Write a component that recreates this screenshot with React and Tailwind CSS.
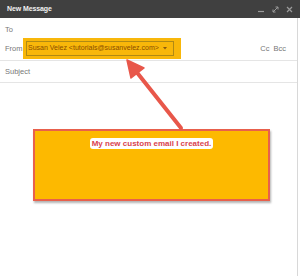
export default function App() {
    return (
        <div className="relative h-[276px] w-[300px] overflow-hidden bg-white font-['Liberation_Sans',Arial,sans-serif]">
            <div className="flex h-[18px] items-center justify-between bg-[#404040] pl-[7px] pr-[7px]">
                <span className="text-[7px] font-bold tracking-[-0.1px] text-[#f2f2f2]">New Message</span>
                <div className="flex items-center gap-[7px] text-[#9a9a9a]">
                    <svg width="7" height="7" viewBox="0 0 7 7"><path d="M0 5.5h6" stroke="currentColor" strokeWidth="1.2" /></svg>
                    <svg width="7" height="7" viewBox="0 0 7 7"><path d="M1 6 6 1M3.5 1H6v2.5M1 3.5V6h2.5" stroke="currentColor" strokeWidth="1" fill="none" /></svg>
                    <svg width="7" height="7" viewBox="0 0 7 7"><path d="M1 1l5 5M6 1 1 6" stroke="currentColor" strokeWidth="1.2" /></svg>
                </div>
            </div>
            <div className="h-[258px] w-[298px] border-r border-[#d8d8d8]">
                <div className="flex h-[20px] items-end pb-[3px] pl-[5px] text-[7.5px] text-[#777]">To</div>
                <div className="flex h-[23px] items-start border-b border-[#e5e5e5] pl-[5px] pr-[11px]">
                    <span className="mt-[5px] w-[18px] text-[7.5px] text-[#777]">From</span>
                    <div className="h-[21px] w-[158px] bg-[#f8b70a] p-[3px]">
                        <div className="flex h-[15px] w-[148px] items-center justify-between border border-[#b08a14] pl-[1px] pr-[6px] text-[7px] text-[#8a4d00]">
                            <span>Susan Velez &lt;tutorials@susanvelez.com&gt;</span>
                            <svg width="4" height="3" viewBox="0 0 4 3"><path d="M0 0h4L2 2.5z" fill="#8a5a10" /></svg>
                        </div>
                    </div>
                    <div className="mt-[5px] ml-auto flex gap-[4px] text-[7.5px] text-[#777]">
                        <span>Cc</span>
                        <span>Bcc</span>
                    </div>
                </div>
                <div className="flex h-[22px] items-center border-b border-[#e5e5e5] pl-[5px] text-[7.5px] text-[#777]">Subject</div>
                <div className="pl-[33px] pt-[46px]">
                    <div className="flex h-[72px] w-[237px] justify-center border-2 border-[#e8604c] bg-[#fdb900] pt-[7px] shadow-[1px_2px_2px_rgba(0,0,0,0.3)]">
                        <span className="h-[11px] rounded-[3px] bg-white px-[2px] text-[8px] leading-[11px] font-bold text-[#d9434e]">My new custom email I created.</span>
                    </div>
                </div>
            </div>
            <svg className="absolute left-0 top-0" width="300" height="276" viewBox="0 0 300 276">
                <line x1="181" y1="128" x2="135" y2="70" stroke="#e8574a" strokeWidth="4" strokeLinecap="round" />
                <polygon points="127,60 144,68 131,78" fill="#e8574a" stroke="#e8574a" strokeWidth="1.5" strokeLinejoin="round" />
            </svg>
        </div>
    )
}
